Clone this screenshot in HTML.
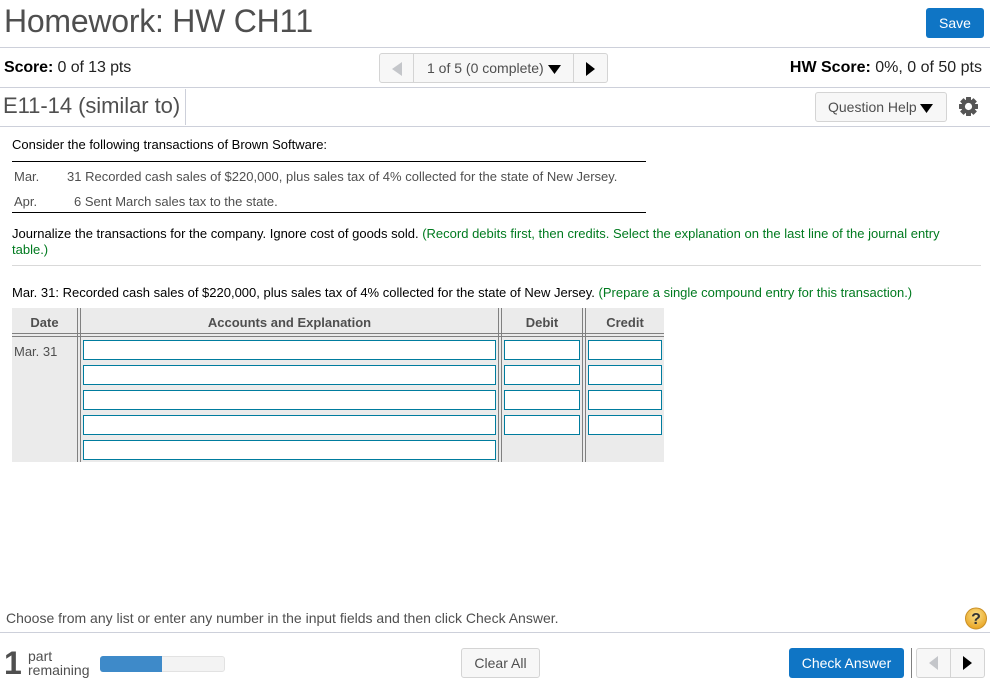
<!DOCTYPE html>
<html><head><meta charset="utf-8"><style>
html,body{margin:0;padding:0;background:#fff}
body{width:990px;height:691px;position:relative;overflow:hidden;font-family:"Liberation Sans",sans-serif;color:#4f4f4f}
.t{position:absolute;white-space:nowrap}
.s{font-size:13px;line-height:15px}
.b{position:absolute}
.hl{position:absolute;left:0;width:990px;height:1px;background:#cdd0da}
.i{position:absolute;box-sizing:border-box;height:20px;background:#fff;border:1px solid #007c9e}
.v{position:absolute;width:1px;background:#808080;top:308px;height:154px}
.k{color:#000}
.g{color:#007a1f}
.btn{position:absolute;box-sizing:border-box;border:1px solid #d4d4d4;border-radius:3px;background:#f7f7f7}
.blue{position:absolute;box-sizing:border-box;border-radius:3px;background:#0f75c5;color:#fff;text-align:center;font-size:14px}
</style></head><body>
<div class="t" style="left:4px;top:3px;font-size:32px;line-height:37px;color:#4f4f4f;letter-spacing:-.24px;font-kerning:none">Homework: HW CH<span style="letter-spacing:-1.9px">11</span></div>
<div class="blue" style="left:926px;top:8px;width:58px;height:30px;line-height:30px">Save</div>
<div class="hl" style="top:47px"></div>
<div class="t k" style="left:4px;top:59px;font-size:16px;line-height:18px;color:#222;letter-spacing:-.1px"><b style="color:#000">Score:</b> 0 of 13 pts</div>

<div class="btn" style="left:379px;top:53px;width:229px;height:30px"></div>
<div class="b" style="left:413px;top:54px;width:1px;height:28px;background:#d4d4d4"></div>
<div class="b" style="left:573px;top:54px;width:1px;height:28px;background:#d4d4d4"></div>
<svg class="b" style="left:392px;top:62px" width="10" height="14"><path d="M0 7L10 0V14Z" fill="#c4c6ca"/></svg>
<div class="t" style="left:427px;top:60px;font-size:14px;line-height:16px">1 of 5 (0 complete)</div>
<svg class="b" style="left:548px;top:65px" width="14" height="9"><path d="M0 0H13L6.5 9Z" fill="#000"/></svg>
<svg class="b" style="left:586px;top:62px" width="10" height="14"><path d="M0 0L9 7L0 14Z" fill="#000"/></svg>
<div class="t" style="right:8px;top:59px;font-size:16px;line-height:18px;color:#222"><b style="color:#000">HW Score:</b> 0%, 0 of 50 pts</div>
<div class="hl" style="top:87px"></div>

<div class="t" style="left:3px;top:93px;font-size:22px;line-height:26px;letter-spacing:-.05px">E11-14 (similar to)</div>
<div class="b" style="left:185px;top:89px;width:1px;height:36px;background:#cdd0da"></div>
<div class="btn" style="left:815px;top:92px;width:132px;height:30px"></div>
<div class="t" style="left:828px;top:99px;font-size:14px;line-height:16px">Question Help</div>
<svg class="b" style="left:920px;top:104px" width="14" height="9"><path d="M0 0H13L6.5 9Z" fill="#000"/></svg>
<svg class="b" style="left:958px;top:96px" width="21" height="21" viewBox="0 0 21 21"><g fill="#555"><circle cx="10.5" cy="10.5" r="7"/><rect x="8" y="1" width="5" height="19" rx=".5"/><rect x="8" y="1" width="5" height="19" rx=".5" transform="rotate(45 10.5 10.5)"/><rect x="8" y="1" width="5" height="19" rx=".5" transform="rotate(90 10.5 10.5)"/><rect x="8" y="1" width="5" height="19" rx=".5" transform="rotate(135 10.5 10.5)"/></g><circle cx="10.5" cy="10.5" r="3.6" fill="#fff"/></svg>
<div class="hl" style="top:126px"></div>

<div class="t k s" style="left:12px;top:137px">Consider the following transactions of Brown Software:</div>
<div class="b" style="left:12px;top:161px;width:634px;height:1px;background:#000"></div>
<div class="t s" style="left:14px;top:169px">Mar.</div>
<div class="t s" style="left:67px;top:169px">31 Recorded cash sales of $220,000, plus sales tax of 4% collected for the state of New Jersey.</div>
<div class="t s" style="left:14px;top:194px">Apr.</div>
<div class="t s" style="left:74px;top:194px">6 Sent March sales tax to the state.</div>
<div class="b" style="left:12px;top:212px;width:634px;height:1px;background:#000"></div>

<div class="t k s" style="left:12px;top:226px">Journalize the transactions for the company. Ignore cost of goods sold. <span class="g">(Record debits first, then credits. Select the explanation on the last line of the journal entry</span></div>
<div class="t g s" style="left:12px;top:242px">table.)</div>
<div class="b" style="left:12px;top:265px;width:969px;height:1px;background:#d9d9d9"></div>
<div class="t k s" style="left:12px;top:285px">Mar. 31: Recorded cash sales of $220,000, plus sales tax of 4% collected for the state of New Jersey. <span class="g">(Prepare a single compound entry for this transaction.)</span></div>

<div class="b" style="left:12px;top:308px;width:652px;height:154px;background:#ebebeb"></div>
<div class="b" style="left:12px;top:333px;width:652px;height:1px;background:#808080"></div>
<div class="b" style="left:12px;top:336px;width:652px;height:1px;background:#808080"></div>
<div class="v" style="left:77px"></div><div class="v" style="left:80px"></div>
<div class="v" style="left:498px"></div><div class="v" style="left:501px"></div>
<div class="v" style="left:582px"></div><div class="v" style="left:585px"></div>
<div class="t s" style="left:12px;width:65px;text-align:center;top:315px;font-weight:bold">Date</div>
<div class="t s" style="left:81px;width:417px;text-align:center;top:315px;font-weight:bold">Accounts and Explanation</div>
<div class="t s" style="left:502px;width:80px;text-align:center;top:315px;font-weight:bold">Debit</div>
<div class="t s" style="left:586px;width:78px;text-align:center;top:315px;font-weight:bold">Credit</div>
<div class="t s" style="left:14px;top:344px">Mar. 31</div>

<div class="i" style="left:83px;top:340px;width:413px"></div>
<div class="i" style="left:83px;top:365px;width:413px"></div>
<div class="i" style="left:83px;top:390px;width:413px"></div>
<div class="i" style="left:83px;top:415px;width:413px"></div>
<div class="i" style="left:83px;top:440px;width:413px"></div>
<div class="i" style="left:504px;top:340px;width:76px"></div>
<div class="i" style="left:504px;top:365px;width:76px"></div>
<div class="i" style="left:504px;top:390px;width:76px"></div>
<div class="i" style="left:504px;top:415px;width:76px"></div>
<div class="i" style="left:588px;top:340px;width:74px"></div>
<div class="i" style="left:588px;top:365px;width:74px"></div>
<div class="i" style="left:588px;top:390px;width:74px"></div>
<div class="i" style="left:588px;top:415px;width:74px"></div>

<div class="t" style="left:6px;top:610px;font-size:14px;line-height:16px">Choose from any list or enter any number in the input fields and then click Check Answer.</div>
<svg class="b" style="left:964px;top:606px" width="24" height="25" viewBox="0 0 24 25"><defs><radialGradient id="q" cx="50%" cy="35%" r="65%"><stop offset="0" stop-color="#fbe08a"/><stop offset="1" stop-color="#e8a422"/></radialGradient></defs><circle cx="12" cy="12.5" r="10.5" fill="url(#q)" stroke="#c98f25"/><text x="12" y="18" text-anchor="middle" font-family="Liberation Sans" font-weight="bold" font-size="16" fill="#333">?</text></svg>
<div class="hl" style="top:632px"></div>

<div class="t" style="left:4px;top:647px;font-size:32px;line-height:32px;font-weight:bold">1</div>
<div class="t" style="left:28px;top:649px;font-size:14px;line-height:14px">part<br>remaining</div>
<div class="b" style="left:100px;top:656px;width:125px;height:16px;box-sizing:border-box;background:#f3f3f3;border:1px solid #e2e2e2;border-radius:3px"></div>
<div class="b" style="left:100px;top:656px;width:62px;height:16px;background:#3e8ac9;border-radius:3px 0 0 3px"></div>

<div class="btn" style="left:461px;top:648px;width:79px;height:30px"></div>
<div class="t" style="left:461px;width:79px;text-align:center;top:655px;font-size:14px;line-height:16px">Clear All</div>

<div class="blue" style="left:789px;top:648px;width:115px;height:30px;line-height:30px">Check Answer</div>
<div class="b" style="left:911px;top:648px;width:1px;height:30px;background:#808080"></div>
<div class="btn" style="left:916px;top:648px;width:69px;height:30px"></div>
<div class="b" style="left:950px;top:649px;width:1px;height:28px;background:#d4d4d4"></div>
<svg class="b" style="left:929px;top:656px" width="10" height="14"><path d="M0 7L9 0V14Z" fill="#c4c6ca"/></svg>
<svg class="b" style="left:963px;top:656px" width="10" height="14"><path d="M0 0L9 7L0 14Z" fill="#000"/></svg>
</body></html>
